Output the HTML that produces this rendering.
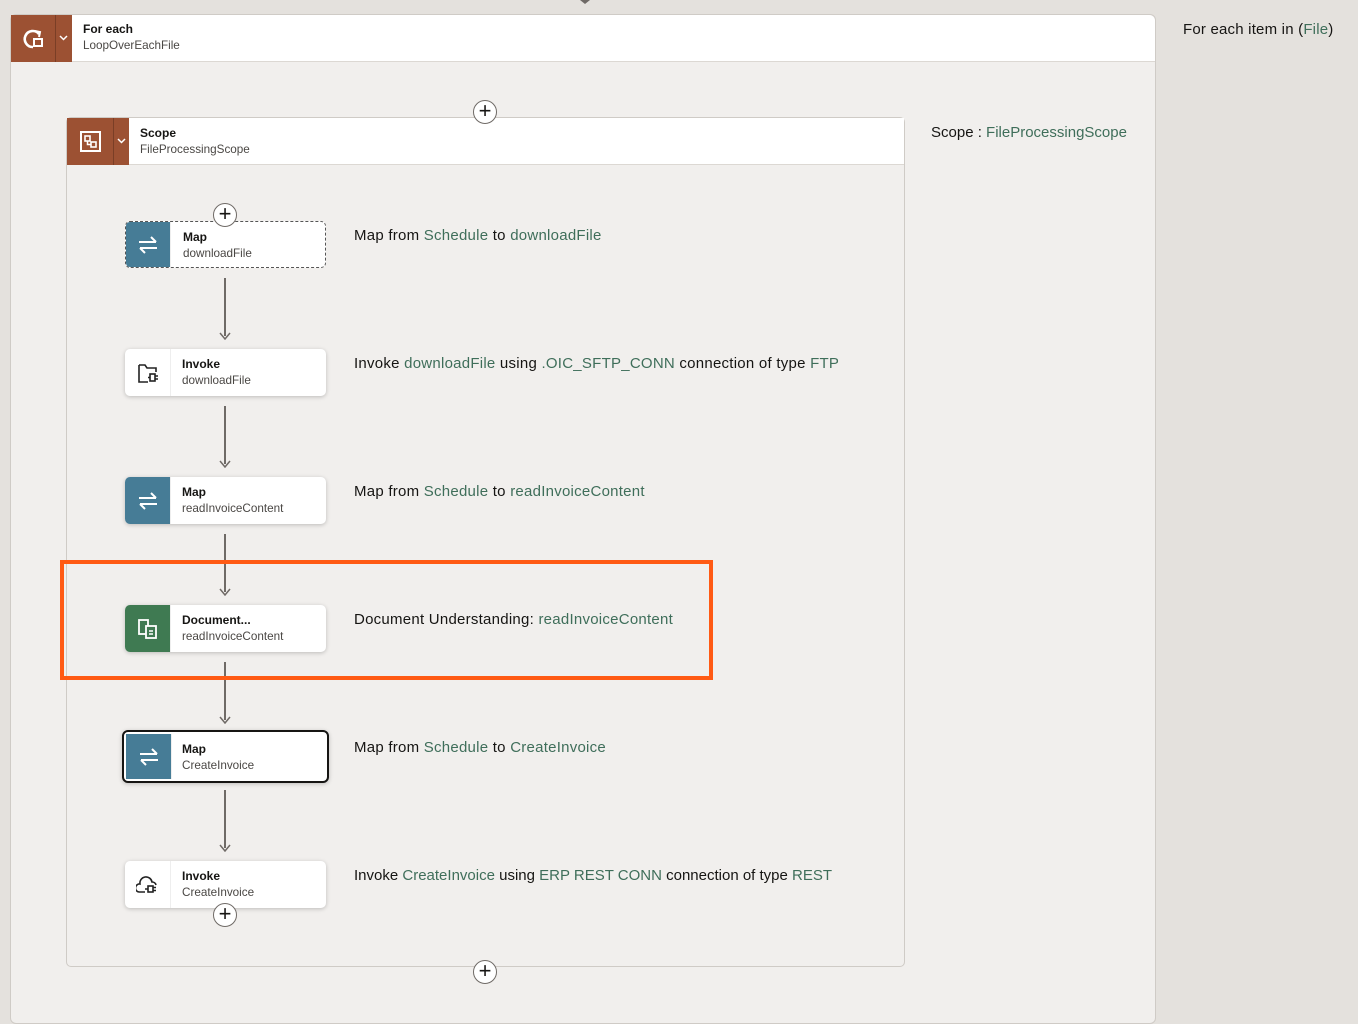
<!DOCTYPE html>
<html><head><meta charset="utf-8"><style>
*{box-sizing:border-box;margin:0;padding:0}
body{width:1358px;height:1007px;background:#e4e1dd;font-family:"Liberation Sans",sans-serif;position:relative;overflow:hidden;color:#161513}
.abs{position:absolute}
.g{color:#3f6e5a}
.loop{left:10px;top:14px;width:1146px;height:1010px;background:#f1efed;border:1px solid #cfcbc6;border-radius:6px}
.hdr{background:#fff;border-bottom:1px solid #dcd8d3}
.brown{background:#9c5133}
.t1{font-size:12px;font-weight:bold}
.t2{font-size:11.7px;color:#4a4744}
.node{width:201px;height:47px;background:#fff;border-radius:5px;box-shadow:0 1px 4px rgba(0,0,0,.22);overflow:hidden}
.node .ic{position:absolute;left:0;top:0;width:46px;height:47px;display:flex;align-items:center;justify-content:center;border-right:1px solid #eee}
.node .a{position:absolute;left:57px;top:8px}
.node .b{position:absolute;left:57px;top:25px}
.line{width:2px;background:#6f6a66;left:224px}
.arr{left:219px;width:12px;height:8px}
.desc{font-size:15px;left:354px;letter-spacing:0.25px}
.plus{width:24px;height:24px;border-radius:50%;background:#fff;border:1px solid #6f6a66;font-size:22px;line-height:20px;text-align:center;color:#161513}
</style></head><body>
<div class="abs" style="left:580px;top:0;width:0;height:0;border-left:5px solid transparent;border-right:5px solid transparent;border-top:4px solid #6f6a66"></div>
<div class="abs loop"></div>
<div class="abs hdr" style="left:11px;top:15px;width:1144px;height:47px;border-radius:6px 6px 0 0"></div>
<div class="abs brown" style="left:11px;top:15px;width:61px;height:47px"></div>
<div class="abs" style="left:55px;top:15px;width:1px;height:47px;background:#7a3e26"></div>
<svg class="abs" style="left:22px;top:28px" width="22" height="22" viewBox="0 0 22 22"><path d="M17 6 A8 8 0 1 0 11 19" fill="none" stroke="#fff" stroke-width="2.6"/><path d="M13 3 L18 4 L17 9" fill="none" stroke="#fff" stroke-width="2"/><rect x="12" y="11" width="8" height="7" fill="none" stroke="#fff" stroke-width="2"/></svg>
<svg class="abs" style="left:59px;top:35px" width="9" height="6"><path d="M1 1 L4.5 4.5 L8 1" stroke="#fff" fill="none" stroke-width="1.5"/></svg>
<div class="abs t1" style="left:83px;top:22px">For each</div>
<div class="abs t2" style="left:83px;top:39px">LoopOverEachFile</div>
<div class="abs" style="left:1183px;top:21px;font-size:15px;letter-spacing:0.2px">For each item in (<span class="g">File</span>)</div>

<div class="abs" style="left:66px;top:117px;width:839px;height:850px;border:1px solid #cfcbc6;border-radius:5px;background:#f1efed"></div>
<div class="abs hdr" style="left:67px;top:118px;width:837px;height:47px"></div>
<div class="abs brown" style="left:67px;top:118px;width:62px;height:47px"></div>
<div class="abs" style="left:113px;top:118px;width:1px;height:47px;background:#7a3e26"></div>
<svg class="abs" style="left:80px;top:131px" width="21" height="21"><rect x="1" y="1" width="19" height="19" fill="none" stroke="#fff" stroke-width="2"/><rect x="5" y="5" width="5" height="5" fill="none" stroke="#fff" stroke-width="1.6"/><rect x="11" y="11" width="5" height="5" fill="none" stroke="#fff" stroke-width="1.6"/><path d="M7.5 10 V13.5 H11" stroke="#fff" fill="none" stroke-width="1.5"/></svg>
<svg class="abs" style="left:117px;top:138px" width="9" height="6"><path d="M1 1 L4.5 4.5 L8 1" stroke="#fff" fill="none" stroke-width="1.5"/></svg>
<div class="abs t1" style="left:140px;top:126px">Scope</div>
<div class="abs t2" style="left:140px;top:143px">FileProcessingScope</div>
<div class="abs" style="left:931px;top:124px;font-size:15px">Scope : <span class="g">FileProcessingScope</span></div>
<div class="abs plus" style="left:473px;top:100px">+</div>
<div class="abs plus" style="left:473px;top:960px">+</div>

<div class="abs line" style="top:278px;height:58px"></div><svg class="abs arr" style="top:332px"><path d="M1 1 L6 7 L11 1" stroke="#6f6a66" fill="none" stroke-width="1.5"/></svg>
<div class="abs line" style="top:406px;height:58px"></div><svg class="abs arr" style="top:460px"><path d="M1 1 L6 7 L11 1" stroke="#6f6a66" fill="none" stroke-width="1.5"/></svg>
<div class="abs line" style="top:534px;height:58px"></div><svg class="abs arr" style="top:588px"><path d="M1 1 L6 7 L11 1" stroke="#6f6a66" fill="none" stroke-width="1.5"/></svg>
<div class="abs line" style="top:662px;height:58px"></div><svg class="abs arr" style="top:716px"><path d="M1 1 L6 7 L11 1" stroke="#6f6a66" fill="none" stroke-width="1.5"/></svg>
<div class="abs line" style="top:790px;height:58px"></div><svg class="abs arr" style="top:844px"><path d="M1 1 L6 7 L11 1" stroke="#6f6a66" fill="none" stroke-width="1.5"/></svg>

<div class="abs node" style="left:125px;top:221px;border:1px dashed #555;box-shadow:none"><div class="ic" style="background:#467c96;left:-1px;top:-1px"><svg width="22" height="18"><path d="M2 6 H19 M14 1 L19 6 M20 12 H3 M8 17 L3 12" stroke="#fff" fill="none" stroke-width="2"/></svg></div><div class="a t1">Map</div><div class="b t2">downloadFile</div></div>
<div class="abs plus" style="left:213px;top:203px">+</div>
<div class="abs desc" style="top:227px">Map from <span class="g">Schedule</span> to <span class="g">downloadFile</span></div>

<div class="abs node" style="left:125px;top:349px"><div class="ic"><svg width="22" height="22"><path d="M2 3 H8 L10 6 H19 V10 M2 3 V20 H11" stroke="#222" fill="none" stroke-width="1.6"/><rect x="13" y="12" width="5" height="7" fill="none" stroke="#222" stroke-width="1.6"/><path d="M11 15.5 H13 M18 14 H21 M18 17 H21" stroke="#222" stroke-width="1.6"/></svg></div><div class="a t1">Invoke</div><div class="b t2">downloadFile</div></div>
<div class="abs desc" style="top:355px">Invoke <span class="g">downloadFile</span> using <span class="g">.OIC_SFTP_CONN</span> connection of type <span class="g">FTP</span></div>

<div class="abs node" style="left:125px;top:477px"><div class="ic" style="background:#467c96"><svg width="22" height="18"><path d="M2 6 H19 M14 1 L19 6 M20 12 H3 M8 17 L3 12" stroke="#fff" fill="none" stroke-width="2"/></svg></div><div class="a t1">Map</div><div class="b t2">readInvoiceContent</div></div>
<div class="abs desc" style="top:483px">Map from <span class="g">Schedule</span> to <span class="g">readInvoiceContent</span></div>

<div class="abs node" style="left:125px;top:605px"><div class="ic" style="background:#3f7a52"><svg width="22" height="22"><rect x="2" y="2" width="9" height="14" fill="none" stroke="#fff" stroke-width="1.8"/><rect x="9" y="8" width="10" height="12" fill="#3f7a52" stroke="#fff" stroke-width="1.8"/><path d="M12 13 H16 M12 16 H16" stroke="#fff" stroke-width="1.5"/></svg></div><div class="a t1">Document...</div><div class="b t2">readInvoiceContent</div></div>
<div class="abs desc" style="top:611px">Document Understanding: <span class="g">readInvoiceContent</span></div>
<div class="abs" style="left:60px;top:560px;width:653px;height:120px;border:4px solid #ff5a14"></div>

<div class="abs node" style="left:122px;top:730px;width:207px;height:53px;border:2px solid #161513;border-radius:6px"><div class="ic" style="background:#467c96;left:2px;top:2px;height:45px"><svg width="22" height="18"><path d="M2 6 H19 M14 1 L19 6 M20 12 H3 M8 17 L3 12" stroke="#fff" fill="none" stroke-width="2"/></svg></div><div class="a t1" style="left:58px;top:10px">Map</div><div class="b t2" style="left:58px;top:27px">CreateInvoice</div></div>
<div class="abs desc" style="top:739px">Map from <span class="g">Schedule</span> to <span class="g">CreateInvoice</span></div>

<div class="abs node" style="left:125px;top:861px"><div class="ic"><svg width="24" height="20"><path d="M9 17 H3 A4 4 0 0 1 4 9 A6 6 0 0 1 16 7 A4 4 0 0 1 20 10" stroke="#222" fill="none" stroke-width="1.6"/><rect x="12" y="11" width="5" height="6" fill="none" stroke="#222" stroke-width="1.6"/><path d="M9 14 H12 M17 12.5 H20 M17 15.5 H20" stroke="#222" stroke-width="1.6"/></svg></div><div class="a t1">Invoke</div><div class="b t2">CreateInvoice</div></div>
<div class="abs plus" style="left:213px;top:903px">+</div>
<div class="abs desc" style="top:867px;letter-spacing:0">Invoke <span class="g">CreateInvoice</span> using <span class="g">ERP REST CONN</span> connection of type <span class="g">REST</span></div>
</body></html>
